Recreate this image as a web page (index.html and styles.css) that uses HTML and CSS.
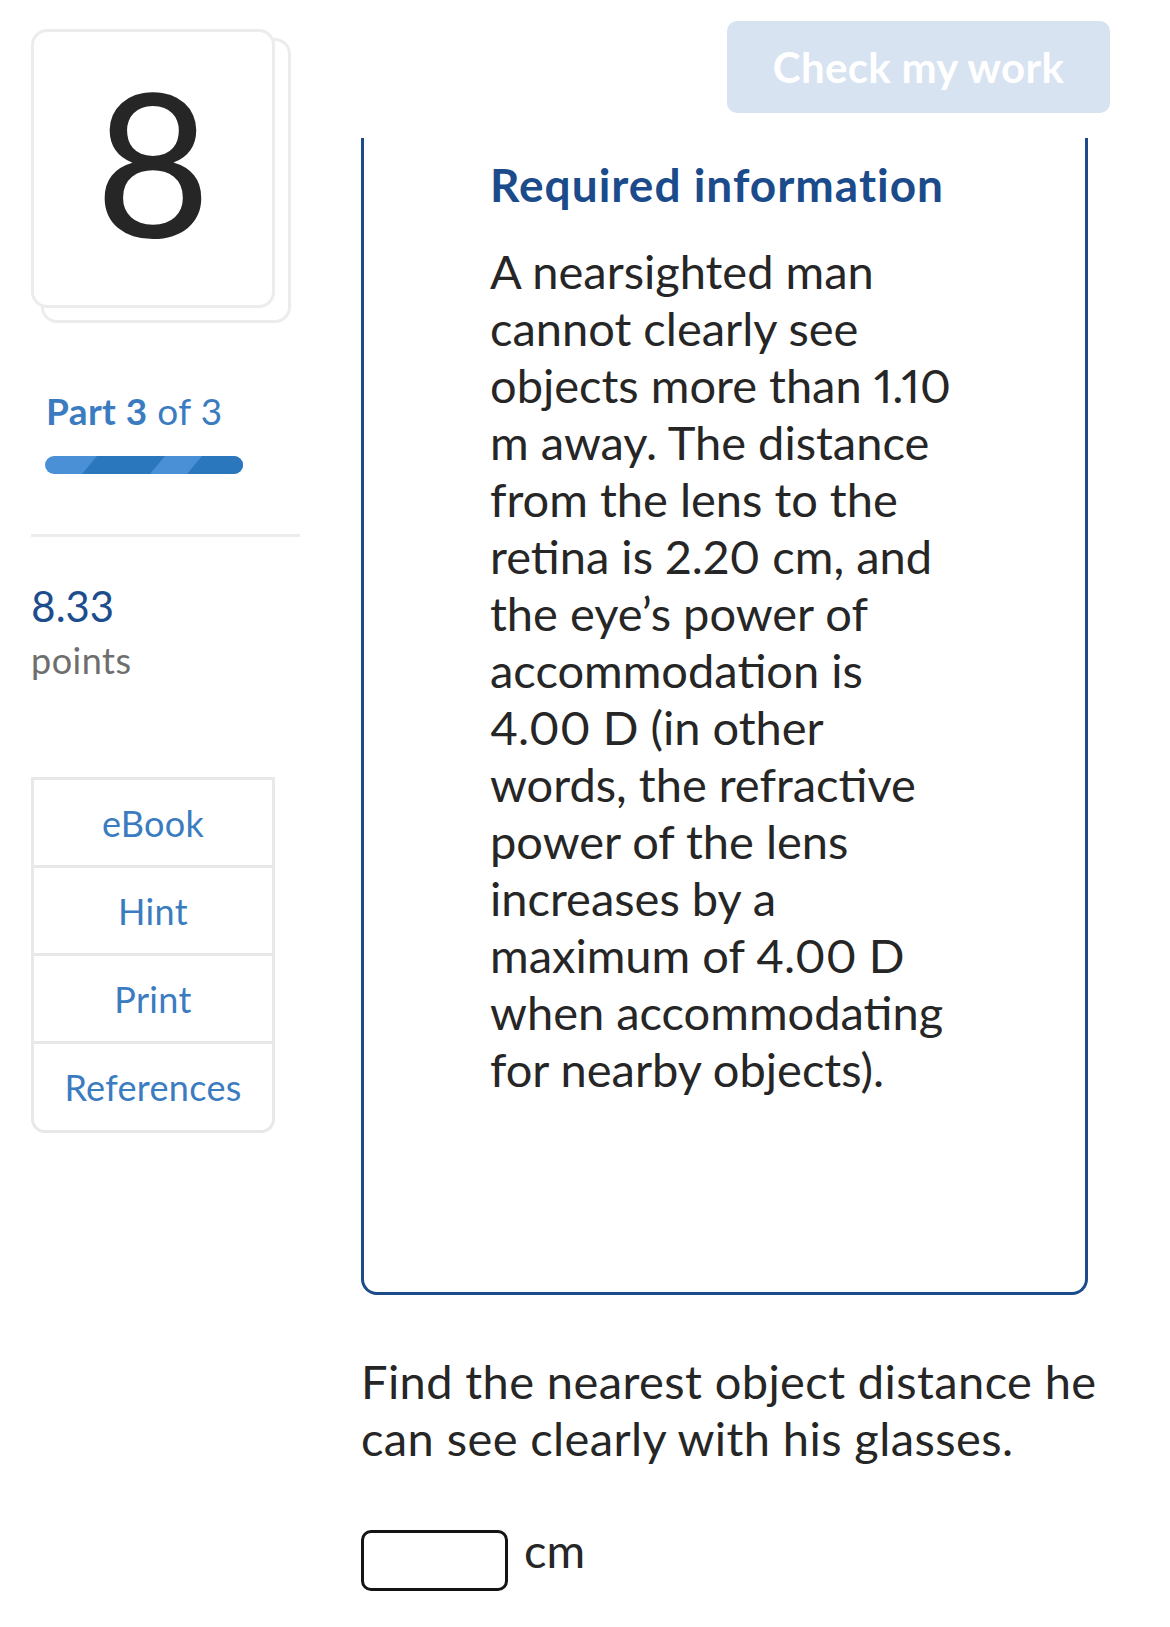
FILE: index.html
```html
<!DOCTYPE html>
<html lang="en">
<head>
<meta charset="utf-8">
<title>Required information</title>
<link rel="stylesheet" href="styles.css">
</head>
<body>
<div class="page">
  <aside class="sidebar">
    <div class="card-stack">
      <div class="card">8</div>
    </div>
    <div class="part"><strong>Part 3</strong> of 3</div>
    <svg class="progress" width="198" height="18" viewBox="0 0 198 18" aria-hidden="true">
      <defs>
        <clipPath id="pill"><rect x="0" y="0" width="198" height="18" rx="9" ry="9"/></clipPath>
      </defs>
      <g clip-path="url(#pill)">
        <rect x="0" y="0" width="198" height="18" fill="#4a90d6"/>
        <polygon points="37,18 52,0 120,0 105,18" fill="#2b77bd"/>
        <polygon points="142,18 157,0 198,0 198,18" fill="#2b77bd"/>
      </g>
    </svg>
    <hr class="divider">
    <div class="score">8.33</div>
    <div class="score-label">points</div>
    <ul class="tools">
      <li class="tool">eBook</li>
      <li class="tool">Hint</li>
      <li class="tool">Print</li>
      <li class="tool">References</li>
    </ul>
  </aside>
  <main class="content">
    <button class="check-btn" type="button" disabled>Check my work</button>
    <section class="info-panel">
      <h2 class="info-title">Required information</h2>
      <p class="info-text">A nearsighted man cannot clearly see objects more than 1.10 m away. The distance from the lens to the retina is 2.20 cm, and the eye’s power of accommodation is 4.00 D (in other words, the refractive power of the lens increases by a maximum of 4.00 D when accommodating for nearby objects).</p>
    </section>
    <p class="question">Find the nearest object distance he can see clearly with his glasses.</p>
    <div class="answer-row">
      <input class="answer-input" type="text" aria-label="answer">
      <span class="unit">cm</span>
    </div>
  </main>
</div>
</body>
</html>
```

FILE: styles.css
```css
* { box-sizing: border-box; }

html, body {
  margin: 0;
  padding: 0;
  background: #ffffff;
}

body {
  font-family: "Lato", "Open Sans", sans-serif;
  font-variant-numeric: proportional-nums;
  color: #262626;
}

.page {
  display: flex;
  align-items: flex-start;
  padding-left: 31px;
  width: 1170px;
}

/* ---------- sidebar ---------- */
.sidebar {
  width: 269px;
  flex: 0 0 269px;
  display: flex;
  flex-direction: column;
  align-items: flex-start;
}

.card-stack {
  position: relative;
  margin-top: 29px;
  width: 259px;
  height: 293px;
}

.card-stack::before {
  content: "";
  position: absolute;
  left: 10px;
  top: 9px;
  width: 244px;
  height: 279px;
  border: 3px solid #ececec;
  border-radius: 16px;
  background: #ffffff;
}

.card {
  position: relative;
  width: 244px;
  height: 279px;
  border: 3px solid #ececec;
  border-radius: 16px;
  background: #ffffff;
  display: flex;
  align-items: center;
  justify-content: center;
  font-size: 200px;
  line-height: 1;
  color: #262626;
  padding-bottom: 18px;
}

.part {
  margin-top: 68px;
  margin-left: 15px;
  font-size: 37px;
  letter-spacing: 0.4px;
  line-height: 42px;
  color: #3b7cc1;
}

.part strong { font-weight: 700; }

.progress {
  display: block;
  margin-top: 24px;
  margin-left: 14px;
}

.divider {
  margin: 60px 0 0 0;
  width: 269px;
  height: 3px;
  border: none;
  background: #ececec;
}

.score {
  margin-top: 45px;
  margin-left: 0;
  font-size: 42px;
  line-height: 48px;
  color: #1d4d8c;
}

.score-label {
  margin-top: 5px;
  margin-left: 0;
  font-size: 36px;
  letter-spacing: 0.5px;
  line-height: 50px;
  color: #6e6e6e;
}

.tools {
  list-style: none;
  margin: 92px 0 0 0;
  padding: 0;
  width: 244px;
  border: 3px solid #e8e8e8;
  border-radius: 0 0 14px 14px;
}

.tool {
  height: 88px;
  display: flex;
  align-items: center;
  justify-content: center;
  font-size: 36px;
  letter-spacing: 0.3px;
  color: #3b7cc1;
  border-bottom: 3px solid #e8e8e8;
}

.tool:last-child { border-bottom: none; height: 86px; }

/* ---------- main ---------- */
.content {
  margin-left: 61px;
  width: 749px;
  display: flex;
  flex-direction: column;
  align-items: flex-start;
}

.check-btn {
  align-self: flex-end;
  margin-top: 21px;
  width: 383px;
  height: 92px;
  border: none;
  border-radius: 10px;
  background: #d8e3f1;
  color: #ffffff;
  font-family: "Lato", "Open Sans", sans-serif;
  font-weight: 700;
  font-size: 42px;
  letter-spacing: 0.3px;
  padding: 0;
}

.info-panel {
  margin-top: 25px;
  width: 727px;
  height: 1157px;
  border: 3px solid #1b4b8a;
  border-top: none;
  border-radius: 0 0 16px 16px;
  padding: 21px 0 0 126px;
}

.info-title {
  margin: 0;
  font-size: 46px;
  letter-spacing: 1px;
  line-height: 52px;
  font-weight: 700;
  color: #1b4b8a;
}

.info-text {
  margin: 32px 0 0 0;
  width: 461px;
  font-size: 47px;
  line-height: 57px;
  color: #262626;
}

.question {
  margin: 58px 0 0 0;
  width: 749px;
  font-size: 47px;
  letter-spacing: 0.4px;
  line-height: 57px;
  color: #262626;
}

.answer-row {
  margin-top: 63px;
  display: flex;
  align-items: flex-start;
}

.answer-input {
  width: 147px;
  height: 61px;
  border: 3px solid #141414;
  border-radius: 10px;
  background: #ffffff;
  margin: 0;
}

.unit {
  margin-left: 16px;
  font-size: 47px;
  line-height: 40px;
  color: #262626;
}
```
